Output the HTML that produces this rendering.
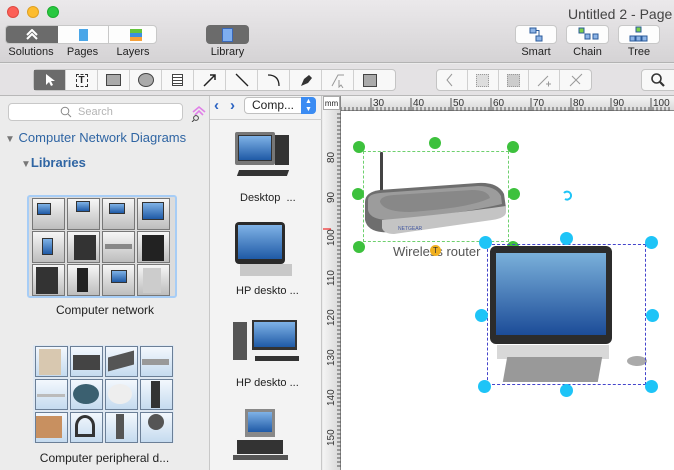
<!DOCTYPE html>
<html><head><meta charset="utf-8"><style>
*{margin:0;padding:0;box-sizing:border-box}
body{width:674px;height:470px;overflow:hidden;font-family:"Liberation Sans",sans-serif;background:#ececec;position:relative;font-size:11px;color:#222}
.a{position:absolute}
.tl{width:12px;height:12px;border-radius:50%;top:6px}
.btn{position:absolute;background:#fdfdfd;border:1px solid #c8c8c8;border-radius:4px}
.lbl{position:absolute;font-size:11px;color:#222;text-align:center}
.tb{position:absolute;top:69px;height:22px;border:1px solid #c4c4c4;border-radius:4px;background:#f8f8f8;display:flex}
.tb div{width:32px;border-right:1px solid #d0d0d0;display:flex;align-items:center;justify-content:center}
.cell{position:absolute;width:33px;height:32px;background:linear-gradient(#f6f6f6,#bdbdbd);border:1px solid #777}
.cell2{position:absolute;width:33px;height:31px;background:linear-gradient(#f3f8fd,#c5dbef);border:1px solid #6b7f97}
.scr{position:absolute;background:linear-gradient(#7fb2e6,#1f5aa6);border:1px solid #333}
.hg{position:absolute;width:12px;height:12px;border-radius:50%;background:#3dc13d}
.hb{position:absolute;width:13px;height:13px;border-radius:50%;background:#1ec4f7}
</style></head><body>
<div class="a" style="left:0;top:0;width:674px;height:63px;background:linear-gradient(#ebe9eb,#d5d3d5);border-bottom:1px solid #b3b3b3"></div>
<div class="a tl" style="left:7px;background:#fc5f57;border:1px solid #de4a42"></div>
<div class="a tl" style="left:27px;background:#fdbc2e;border:1px solid #dfa023"></div>
<div class="a tl" style="left:47px;background:#28c840;border:1px solid #1dab2f"></div>
<div class="a" style="left:568px;top:6px;font-size:14px;color:#444">Untitled 2 - Page</div>
<div class="btn" style="left:5px;top:25px;width:152px;height:19px;overflow:hidden">
 <div class="a" style="left:0;top:0;width:52px;height:19px;background:#6b6b6b"></div>
 <div class="a" style="left:102px;top:0;width:1px;height:19px;background:#c8c8c8"></div>
 <svg class="a" style="left:20px;top:3px" width="12" height="13"><path d="M1 6 6 1 11 6M1 10 6 5 11 10" stroke="#fff" stroke-width="2" fill="none"/></svg>
 <div class="a" style="left:73px;top:3px;width:9px;height:12px;background:#4aa6e8"></div>
 <div class="a" style="left:124px;top:3px;width:12px;height:4px;background:#65c43c"></div>
 <div class="a" style="left:124px;top:7px;width:12px;height:4px;background:#3b8fe0"></div>
 <div class="a" style="left:124px;top:11px;width:12px;height:4px;background:#f5a03a"></div>
</div>
<div class="lbl" style="left:4px;top:46px;width:54px">Solutions</div>
<div class="lbl" style="left:60px;top:46px;width:45px">Pages</div>
<div class="lbl" style="left:108px;top:46px;width:50px">Layers</div>
<div class="a" style="left:206px;top:25px;width:43px;height:19px;background:#6b6b6b;border-radius:4px"></div>
<div class="a" style="left:222px;top:28px;width:11px;height:14px;background:#7eaef0;border:1px solid #3a68b8"></div>
<div class="lbl" style="left:200px;top:46px;width:55px">Library</div>
<div class="btn" style="left:515px;top:25px;width:42px;height:19px"><svg width="40" height="17"><rect x="14" y="2" width="6" height="5" fill="#8db4e6" stroke="#2a5a9a"/><rect x="20" y="10" width="6" height="5" fill="#8db4e6" stroke="#2a5a9a"/><path d="M20 4.5h3v5.5" stroke="#2a5a9a" fill="none"/></svg></div>
<div class="btn" style="left:566px;top:25px;width:43px;height:19px"><svg width="41" height="17"><rect x="12" y="2" width="5" height="5" fill="#7cd04a" stroke="#2a5a9a"/><rect x="18" y="8" width="5" height="5" fill="#8db4e6" stroke="#2a5a9a"/><rect x="26" y="8" width="5" height="5" fill="#8db4e6" stroke="#2a5a9a"/></svg></div>
<div class="btn" style="left:618px;top:25px;width:42px;height:19px"><svg width="40" height="17"><rect x="17" y="1" width="5" height="5" fill="#7cd04a" stroke="#2a5a9a"/><rect x="11" y="10" width="5" height="5" fill="#8db4e6" stroke="#2a5a9a"/><rect x="17" y="10" width="5" height="5" fill="#8db4e6" stroke="#2a5a9a"/><rect x="23" y="10" width="5" height="5" fill="#8db4e6" stroke="#2a5a9a"/></svg></div>
<div class="lbl" style="left:515px;top:46px;width:42px">Smart</div>
<div class="lbl" style="left:566px;top:46px;width:43px">Chain</div>
<div class="lbl" style="left:618px;top:46px;width:42px">Tree</div>
<div class="a" style="left:0;top:64px;width:674px;height:32px;background:#e4e2e4;border-bottom:1px solid #b8b8b8"></div>
<div class="tb" style="left:33px;width:363px">
 <div style="background:#6b6b6b"><svg width="12" height="14"><path d="M2 1v11l3-3 2 4 2-1-2-4h4z" fill="#fff"/></svg></div>
 <div><div style="width:12px;height:13px;border:1px dashed #333;font-size:10px;text-align:center;line-height:11px;font-weight:bold">T</div></div>
 <div><div style="width:15px;height:12px;background:#aaa;border:1px solid #444"></div></div>
 <div><div style="width:16px;height:14px;border-radius:50%;background:#aaa;border:1px solid #444"></div></div>
 <div><div style="width:11px;height:12px;border:1px solid #444;background:repeating-linear-gradient(#fff 0 2px,#444 2px 3px)"></div></div>
 <div><svg width="16" height="16"><path d="M2 14 13 3M8 3h5v5" stroke="#222" stroke-width="1.5" fill="none"/></svg></div>
 <div><svg width="16" height="16"><path d="M2 2 14 14" stroke="#222" stroke-width="1.3"/></svg></div>
 <div><svg width="16" height="16"><path d="M2 3Q13 3 13 14" stroke="#222" stroke-width="1.3" fill="none"/></svg></div>
 <div><svg width="16" height="16"><path d="M3 14 6 7 11 3 14 6 10 11z" fill="#333"/></svg></div>
 <div><svg width="16" height="16"><path d="M2 14 8 3 14 3M9 8v7l2-2 2 3" stroke="#999" fill="none"/></svg></div>
 <div style="border:none"><div style="width:14px;height:13px;background:#aaa;border:1px solid #444"></div></div>
</div>
<div class="tb" style="left:436px;width:156px">
 <div><svg width="16" height="16"><path d="M8 2 3 8 8 14" stroke="#999" fill="none"/></svg></div>
 <div><div style="width:13px;height:13px;border:1px dotted #999;background:#ddd"></div></div>
 <div><div style="width:13px;height:13px;border:1px dotted #999;background:#ccc"></div></div>
 <div><svg width="16" height="16"><path d="M2 14 12 4M10 12h5M12.5 9.5v5" stroke="#999" fill="none"/></svg></div>
 <div style="border:none"><svg width="16" height="16"><path d="M2 14 14 2M4 4l8 8" stroke="#999" fill="none"/></svg></div>
</div>
<div class="tb" style="left:641px;width:40px"><div style="border:none"><svg width="16" height="16"><circle cx="6.5" cy="6.5" r="4.5" stroke="#333" stroke-width="1.6" fill="none"/><path d="M10 10 14 14" stroke="#333" stroke-width="2.2"/></svg></div></div>
<div class="a" style="left:209px;top:96px;width:1px;height:374px;background:#c8c8c8"></div>
<div class="a" style="left:8px;top:103px;width:175px;height:18px;background:#fff;border:1px solid #c8c8c8;border-radius:4px;color:#b4b4b4;font-size:11px;padding-left:69px;line-height:16px">Search</div>
<svg class="a" style="left:60px;top:106px" width="12" height="12"><circle cx="5" cy="5" r="3.8" stroke="#888" fill="none"/><path d="M8 8 11 11" stroke="#888"/></svg>
<svg class="a" style="left:190px;top:104px" width="16" height="18"><path d="M3 8 9 3 15 8M5 11 9 7 13 11" stroke="#e080e8" stroke-width="1.6" fill="none"/><circle cx="6" cy="14" r="2.4" stroke="#444" fill="none"/><path d="M4 16 2 18" stroke="#444"/></svg>
<div class="a" style="left:5px;top:130px;font-size:13px;color:#2f65a3"><span style="color:#777;font-size:10px">▼</span> Computer Network Diagrams</div>
<div class="a" style="left:21px;top:155px;font-size:13px;color:#2f65a3;font-weight:bold"><span style="color:#777;font-size:10px;font-weight:normal">▼</span>Libraries</div>
<div class="a" style="left:27px;top:195px;width:150px;height:103px;border:2px solid #a7cdf6;border-radius:3px;background:#dcdcdc"></div>
<div class="a" style="left:30px;top:303px;width:150px;text-align:center;font-size:12px">Computer network</div>
<div class="a" style="left:33px;top:345px;width:141px;height:98px;background:#dfe8f2"></div>
<div class="a" style="left:0;top:451px;width:209px;text-align:center;font-size:12px">Computer peripheral d...</div>
<div class="a" style="left:210px;top:96px;width:112px;height:374px;background:#f3f3f3;border-right:1px solid #c8c8c8"></div>
<div class="a" style="left:210px;top:96px;width:112px;height:24px;border-bottom:1px solid #d0d0d0"></div>
<div class="a" style="left:214px;top:97px;font-size:15px;color:#2a62c2;font-weight:bold">‹</div>
<div class="a" style="left:230px;top:97px;font-size:15px;color:#2a62c2;font-weight:bold">›</div>
<div class="a" style="left:244px;top:97px;width:72px;height:17px;background:#fff;border:1px solid #c0c0c0;border-radius:4px;font-size:12px;padding-left:7px;line-height:15px">Comp...</div>
<div class="a" style="left:301px;top:97px;width:15px;height:17px;background:#3b8cf3;border-radius:0 4px 4px 0;color:#fff;font-size:7px;text-align:center;line-height:8px;padding-top:1px">▲<br>▼</div>
<div class="a" style="left:235px;top:132px;width:40px;height:33px;background:#777;border-radius:2px"></div>
<div class="scr" style="left:238px;top:135px;width:34px;height:26px"></div>
<div class="a" style="left:275px;top:135px;width:14px;height:30px;background:#333"></div>
<div class="a" style="left:238px;top:170px;width:50px;height:6px;background:#333;transform:skewX(-20deg)"></div>
<div class="a" style="left:240px;top:192px;font-size:11px">Desktop &nbsp;...</div>
<div class="a" style="left:235px;top:222px;width:50px;height:42px;background:#2a2a2a;border-radius:4px"></div>
<div class="scr" style="left:238px;top:225px;width:44px;height:34px;border:none"></div>
<div class="a" style="left:240px;top:264px;width:52px;height:12px;background:#c8c8c8"></div>
<div class="a" style="left:236px;top:285px;font-size:11px">HP deskto ...</div>
<div class="a" style="left:233px;top:322px;width:14px;height:38px;background:#555"></div>
<div class="a" style="left:252px;top:320px;width:45px;height:30px;background:#333"></div>
<div class="scr" style="left:254px;top:322px;width:41px;height:25px;border:none"></div>
<div class="a" style="left:255px;top:356px;width:44px;height:5px;background:#333"></div>
<div class="a" style="left:236px;top:377px;font-size:11px">HP deskto ...</div>
<div class="a" style="left:245px;top:409px;width:30px;height:28px;background:#888"></div>
<div class="scr" style="left:248px;top:412px;width:24px;height:20px;border:none"></div>
<div class="a" style="left:237px;top:440px;width:46px;height:14px;background:#333"></div>
<div class="a" style="left:233px;top:455px;width:55px;height:5px;background:#555"></div>
<div class="a" style="left:323px;top:96px;width:18px;height:374px;background:linear-gradient(90deg,#f4f4f4,#d8d8d8);border-right:1px solid #888"></div>
<div class="a" style="left:341px;top:96px;width:333px;height:15px;background:linear-gradient(#f4f4f4,#dadada);border-bottom:1px solid #888"></div>
<div class="a" style="left:323px;top:96px;width:17px;height:14px;background:#fff;font-size:8px;line-height:14px;text-align:center;border:1px solid #aaa">mm</div>
<svg class="a" style="left:341px;top:96px" width="333" height="15"><g stroke="#555">
<path d="M0 15V11M4 15V11M8 15V11M12 15V11M16 15V11M20 15V11M24 15V11M28 15V11M32 15V11M36 15V11M40 15V11M44 15V11M48 15V11M52 15V11M56 15V11M60 15V11M64 15V11M68 15V11M72 15V11M76 15V11M80 15V11M84 15V11M88 15V11M92 15V11M96 15V11M100 15V11M104 15V11M108 15V11M112 15V11M116 15V11M120 15V11M124 15V11M128 15V11M132 15V11M136 15V11M140 15V11M144 15V11M148 15V11M152 15V11M156 15V11M160 15V11M164 15V11M168 15V11M172 15V11M176 15V11M180 15V11M184 15V11M188 15V11M192 15V11M196 15V11M200 15V11M204 15V11M208 15V11M212 15V11M216 15V11M220 15V11M224 15V11M228 15V11M232 15V11M236 15V11M240 15V11M244 15V11M248 15V11M252 15V11M256 15V11M260 15V11M264 15V11M268 15V11M272 15V11M276 15V11M280 15V11M284 15V11M288 15V11M292 15V11M296 15V11M300 15V11M304 15V11M308 15V11M312 15V11M316 15V11M320 15V11M324 15V11M328 15V11"/>
<path d="M30 15V2M70 15V2M110 15V2M150 15V2M190 15V2M230 15V2M270 15V2M310 15V2"/></g>
<g font-size="10" fill="#333" font-family="Liberation Sans"><text x="32" y="10">30</text><text x="72" y="10">40</text><text x="112" y="10">50</text><text x="152" y="10">60</text><text x="192" y="10">70</text><text x="232" y="10">80</text><text x="272" y="10">90</text><text x="312" y="10">100</text></g></svg>
<svg class="a" style="left:323px;top:111px" width="18" height="359"><g stroke="#555">
<path d="M14 3H18M14 7H18M14 11H18M14 15H18M14 19H18M14 23H18M14 27H18M14 31H18M14 35H18M14 39H18M14 43H18M14 47H18M14 51H18M14 55H18M14 59H18M14 63H18M14 67H18M14 71H18M14 75H18M14 79H18M14 83H18M14 87H18M14 91H18M14 95H18M14 99H18M14 103H18M14 107H18M14 111H18M14 115H18M14 119H18M14 123H18M14 127H18M14 131H18M14 135H18M14 139H18M14 143H18M14 147H18M14 151H18M14 155H18M14 159H18M14 163H18M14 167H18M14 171H18M14 175H18M14 179H18M14 183H18M14 187H18M14 191H18M14 195H18M14 199H18M14 203H18M14 207H18M14 211H18M14 215H18M14 219H18M14 223H18M14 227H18M14 231H18M14 235H18M14 239H18M14 243H18M14 247H18M14 251H18M14 255H18M14 259H18M14 263H18M14 267H18M14 271H18M14 275H18M14 279H18M14 283H18M14 287H18M14 291H18M14 295H18M14 299H18M14 303H18M14 307H18M14 311H18M14 315H18M14 319H18M14 323H18M14 327H18M14 331H18M14 335H18M14 339H18M14 343H18M14 347H18M14 351H18M14 355H18"/></g>
<path d="M0 118H8" stroke="#e00"/>
<g font-size="10" fill="#333" font-family="Liberation Sans">
<text transform="translate(11,52) rotate(-90)">80</text><text transform="translate(11,92) rotate(-90)">90</text><text transform="translate(11,135) rotate(-90)">100</text><text transform="translate(11,175) rotate(-90)">110</text><text transform="translate(11,215) rotate(-90)">120</text><text transform="translate(11,255) rotate(-90)">130</text><text transform="translate(11,295) rotate(-90)">140</text><text transform="translate(11,335) rotate(-90)">150</text></g></svg>
<div class="a" style="left:341px;top:111px;width:333px;height:359px;background:#fff"></div>
<svg class="a" style="left:360px;top:150px" width="150" height="100">
<rect x="20" y="2" width="3" height="50" rx="1" fill="#444"/>
<path d="M5 52Q5 42 20 40L118 33Q138 32 144 44L146 58Q146 66 132 68L32 82Q8 84 5 70z" fill="#6e6e6e"/>
<path d="M8 50Q8 44 20 43L118 36Q136 36 141 46L142 54Q100 64 30 70Q10 70 8 60z" fill="#9c9c9c"/>
<path d="M20 52Q20 46 34 45L112 40Q128 40 130 48Q110 58 50 62Q24 62 20 52z" fill="#888"/>
<path d="M22 70Q90 64 146 56V62Q146 68 132 70L34 84Q24 84 22 78z" fill="#c4c4c4"/>
<text x="38" y="80" font-size="5" fill="#4458a0" font-family="Liberation Sans">NETGEAR</text>
</svg>
<div class="a" style="left:363px;top:151px;width:146px;height:91px;border:1px dashed #6ed06e"></div>
<div class="hg" style="left:353px;top:141px"></div><div class="hg" style="left:429px;top:137px"></div><div class="hg" style="left:507px;top:141px"></div>
<div class="hg" style="left:352px;top:188px"></div><div class="hg" style="left:508px;top:188px"></div>
<div class="hg" style="left:353px;top:241px"></div><div class="hg" style="left:507px;top:241px"></div>
<div class="a" style="left:393px;top:244px;font-size:13px;color:#555">Wireless router</div>
<div class="a" style="left:430px;top:245px;width:11px;height:11px;border-radius:50%;background:#f0b020;font-size:8px;text-align:center;line-height:11px;color:#333">T</div>
<div class="a" style="left:490px;top:246px;width:122px;height:98px;background:#2c2c2c;border-radius:6px"></div>
<div class="a" style="left:496px;top:253px;width:110px;height:82px;background:linear-gradient(#7ab0da,#1c4c98)"></div>
<div class="a" style="left:497px;top:345px;width:112px;height:14px;background:#d8d8d8"></div>
<div class="a" style="left:505px;top:357px;width:95px;height:25px;background:#999;transform:skewX(-10deg)"></div>
<div class="a" style="left:627px;top:356px;width:20px;height:10px;border-radius:50%;background:#aaa"></div>
<div class="a" style="left:487px;top:244px;width:159px;height:141px;border:1px dashed #4444cc"></div>
<div class="hb" style="left:479px;top:236px"></div><div class="hb" style="left:560px;top:232px"></div><div class="hb" style="left:645px;top:236px"></div>
<div class="hb" style="left:475px;top:309px"></div><div class="hb" style="left:646px;top:309px"></div>
<div class="hb" style="left:478px;top:380px"></div><div class="hb" style="left:560px;top:384px"></div><div class="hb" style="left:645px;top:380px"></div>
<svg class="a" style="left:561px;top:189px" width="12" height="12"><path d="M3 4A4 4 0 1 1 4 10" stroke="#1ec4f7" stroke-width="2" fill="none"/></svg>
<div class="cell" style="left:32px;top:198px"></div><div class="cell" style="left:67px;top:198px"></div><div class="cell" style="left:102px;top:198px"></div><div class="cell" style="left:137px;top:198px"></div>
<div class="cell" style="left:32px;top:231px"></div><div class="cell" style="left:67px;top:231px"></div><div class="cell" style="left:102px;top:231px"></div><div class="cell" style="left:137px;top:231px"></div>
<div class="cell" style="left:32px;top:264px"></div><div class="cell" style="left:67px;top:264px"></div><div class="cell" style="left:102px;top:264px"></div><div class="cell" style="left:137px;top:264px"></div>
<div class="scr" style="left:37px;top:203px;width:14px;height:12px"></div><div class="scr" style="left:76px;top:201px;width:14px;height:11px"></div><div class="scr" style="left:109px;top:203px;width:16px;height:11px"></div><div class="scr" style="left:142px;top:202px;width:22px;height:18px"></div>
<div class="scr" style="left:42px;top:238px;width:11px;height:17px"></div><div class="a" style="left:74px;top:235px;width:22px;height:25px;background:#333"></div><div class="a" style="left:105px;top:244px;width:27px;height:5px;background:#888"></div><div class="a" style="left:142px;top:235px;width:22px;height:26px;background:#222"></div>
<div class="a" style="left:36px;top:267px;width:22px;height:27px;background:#333"></div><div class="a" style="left:77px;top:268px;width:11px;height:24px;background:#222"></div><div class="scr" style="left:111px;top:270px;width:16px;height:13px"></div><div class="a" style="left:143px;top:268px;width:18px;height:25px;background:#ccc"></div>
<div class="cell2" style="left:35px;top:346px"></div><div class="cell2" style="left:70px;top:346px"></div><div class="cell2" style="left:105px;top:346px"></div><div class="cell2" style="left:140px;top:346px"></div>
<div class="cell2" style="left:35px;top:379px"></div><div class="cell2" style="left:70px;top:379px"></div><div class="cell2" style="left:105px;top:379px"></div><div class="cell2" style="left:140px;top:379px"></div>
<div class="cell2" style="left:35px;top:412px"></div><div class="cell2" style="left:70px;top:412px"></div><div class="cell2" style="left:105px;top:412px"></div><div class="cell2" style="left:140px;top:412px"></div>
<div class="a" style="left:39px;top:349px;width:22px;height:26px;background:#d8c8b0"></div><div class="a" style="left:73px;top:355px;width:27px;height:15px;background:#444"></div><div class="a" style="left:108px;top:354px;width:26px;height:14px;background:#555;transform:skewY(-15deg)"></div><div class="a" style="left:142px;top:359px;width:27px;height:6px;background:#999"></div>
<div class="a" style="left:37px;top:394px;width:28px;height:3px;background:#bbb"></div><div class="a" style="left:73px;top:384px;width:26px;height:20px;border-radius:50%;background:#3b6070"></div><div class="a" style="left:108px;top:384px;width:24px;height:20px;border-radius:50%;background:#eee"></div><div class="a" style="left:151px;top:381px;width:9px;height:27px;background:#333"></div>
<div class="a" style="left:36px;top:416px;width:26px;height:22px;background:#c89060"></div><div class="a" style="left:75px;top:415px;width:20px;height:22px;border:3px solid #333;border-radius:50% 50% 0 0"></div><div class="a" style="left:116px;top:414px;width:8px;height:25px;background:#555"></div><div class="a" style="left:148px;top:414px;width:16px;height:16px;border-radius:50%;background:#555"></div>
</body></html>
